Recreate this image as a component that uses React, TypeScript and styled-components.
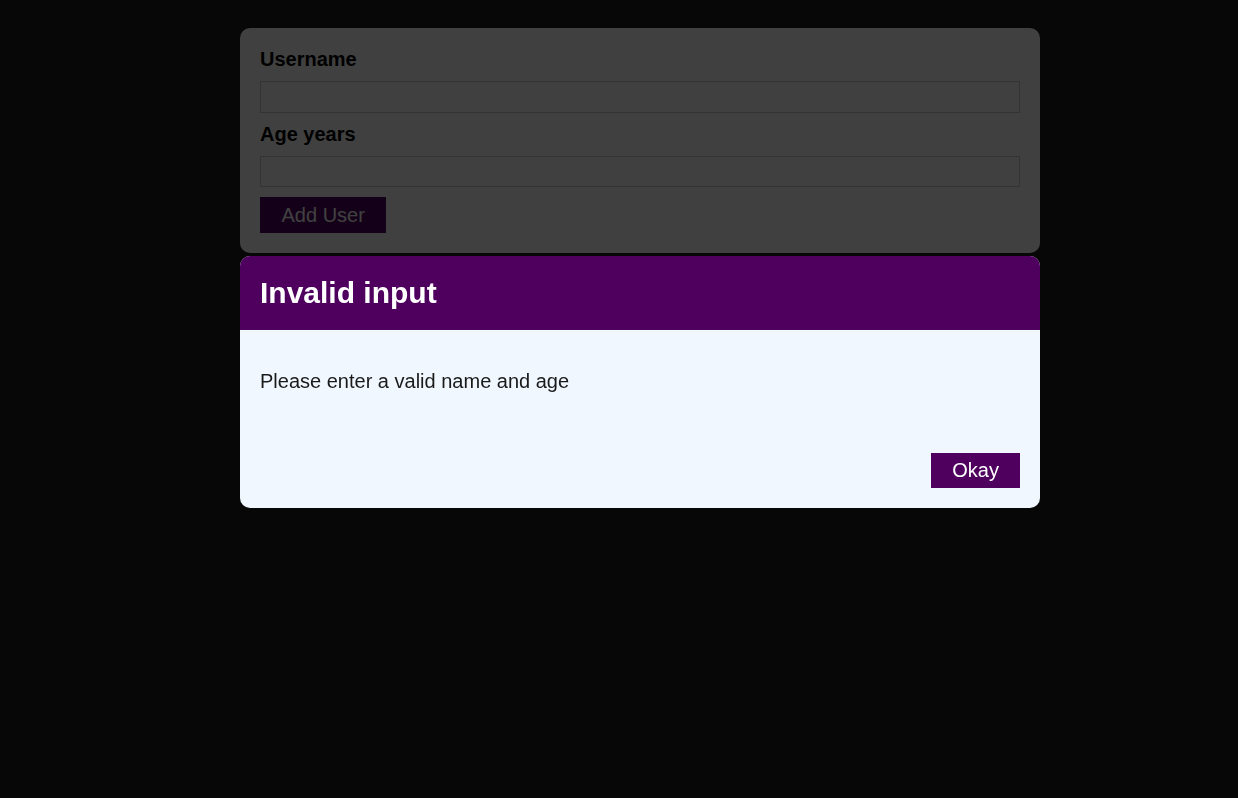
import React from "react";
import styled, { createGlobalStyle } from "styled-components";

const GlobalStyle = createGlobalStyle`
  * { box-sizing: border-box; }
  html { font-size: 20px; }
  body {
    margin: 0;
    background: #1f1f1f;
    font-family: "Liberation Sans", Arial, Helvetica, sans-serif;
    font-size: 20px;
  }
`;

const Page = styled.div`
  padding: 28px 0 0 240px;
  min-height: 798px;
`;

const Card = styled.form`
  width: 800px;
  background: #ffffff;
  border-radius: 10px;
  padding: 20px;
`;

const Label = styled.label`
  display: block;
  font-weight: bold;
  margin-bottom: 10px;
  color: #000;
  line-height: 23px;
`;

const Input = styled.input`
  font: inherit;
  display: block;
  width: 100%;
  height: 31.6px;
  border: 1px solid #ccc;
  padding: 3px;
  margin: 0 0 10px 0;
  background: #fff;
`;

const Button = styled.button<{ $wide?: boolean }>`
  font: inherit;
  font-size: 20px;
  line-height: 23px;
  border: 1px solid #4f005f;
  background: #4f005f;
  color: #ffffff;
  padding: ${(p) => (p.$wide ? "5.5px 20.5px" : "5px 20px")};
  cursor: pointer;
`;

const Backdrop = styled.div`
  position: fixed;
  inset: 0;
  background: rgba(0, 0, 0, 0.75);
  z-index: 10;
`;

const Modal = styled.div`
  position: fixed;
  top: 256px;
  left: 240px;
  width: 800px;
  z-index: 100;
  border-radius: 10px;
  overflow: hidden;
  background: #f0f7ff;
`;

const Header = styled.header`
  background: #4f005f;
  padding: 20px;
`;

const Title = styled.h2`
  margin: 0;
  color: #ffffff;
  font-size: 30px;
  line-height: 34px;
  font-weight: bold;
`;

const Content = styled.div`
  padding: 20px;
`;

const Message = styled.p`
  margin: 20px 0;
  line-height: 23px;
  color: #1a1a1a;
`;

const Footer = styled.footer`
  padding: 20px;
  display: flex;
  justify-content: flex-end;
`;

export default function App() {
  return (
    <>
      <GlobalStyle />
      <Page>
        <Card onSubmit={(e) => e.preventDefault()}>
          <Label htmlFor="username">Username</Label>
          <Input id="username" type="text" />
          <Label htmlFor="age">Age years</Label>
          <Input id="age" type="number" />
          <Button type="submit" $wide>
            Add User
          </Button>
        </Card>
      </Page>
      <Backdrop />
      <Modal>
        <Header>
          <Title>Invalid input</Title>
        </Header>
        <Content>
          <Message>Please enter a valid name and age</Message>
        </Content>
        <Footer>
          <Button type="button">Okay</Button>
        </Footer>
      </Modal>
    </>
  );
}
